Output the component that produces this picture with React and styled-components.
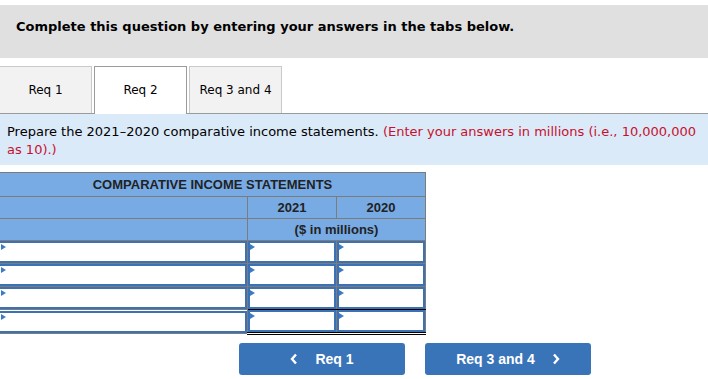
import styled, { createGlobalStyle } from "styled-components";

const GlobalStyle = createGlobalStyle`
  body {
    margin: 0;
    background: #fff;
    font-family: "DejaVu Sans", Verdana, sans-serif;
    color: #000;
  }
`;

const Page = styled.div`
  padding-top: 5px;
  width: 708px;
  overflow: hidden;
`;

const Banner = styled.div`
  box-sizing: border-box;
  height: 53px;
  padding: 14px 16px 0;
  background: #e0e0e0;
  font-size: 13px;
  font-weight: bold;
  line-height: 16px;
`;

const TabBar = styled.div`
  display: flex;
  gap: 2px;
  margin-top: 8px;
  margin-left: -1px;
  border-bottom: 1px solid #9b9b9b;
`;

const Tab = styled.div`
  box-sizing: border-box;
  width: 93px;
  display: flex;
  align-items: center;
  justify-content: center;
  font-size: 12px;
  background: ${({ $active }) => ($active ? "#fff" : "#f2f2f2")};
  border: 1px solid ${({ $active }) => ($active ? "#9b9b9b" : "#c9c9c9")};
  border-bottom: none;
  margin-bottom: ${({ $active }) => ($active ? "-1px" : "0")};
  height: ${({ $active }) => ($active ? "48px" : "47px")};
  padding-bottom: ${({ $active }) => ($active ? "1px" : "0")};
`;

const Instructions = styled.div`
  box-sizing: border-box;
  height: 51px;
  padding: 9px 4px 0 7px;
  background: #dbeaf8;
  font-size: 13px;
  line-height: 18px;
`;

const Note = styled.span`
  color: #c8102e;
`;

const Table = styled.table`
  margin-top: 7px;
  margin-left: -1px;
  width: 427px;
  border-collapse: collapse;
  table-layout: fixed;
  font-family: "Liberation Sans", Arial, sans-serif;
  font-size: 13px;
  font-weight: bold;
  color: #222;
`;

const HeadCell = styled.td`
  height: ${({ $h }) => $h}px;
  padding: 0;
  background: #78abe4;
  border: 1px solid #7c7c7c;
  text-align: center;
  vertical-align: middle;
`;

const InputCell = styled.td`
  height: 22px;
  padding: 0;
  border: 1px solid #7c7c7c;
  border-bottom: ${({ $rule }) =>
    $rule === "single"
      ? "1px solid #000"
      : $rule === "double"
      ? "3px double #000"
      : "1px solid #7c7c7c"};
  background: #fff;
`;

const Field = styled.div`
  position: relative;
  box-sizing: border-box;
  height: 22px;
  border: 2px solid #3c71b4;
  border-left-width: ${({ $first }) => ($first ? "0" : "2px")};
  background: #fff;
`;

const Marker = styled.span`
  position: absolute;
  top: 1px;
  left: ${({ $first }) => ($first ? "1px" : "0")};
  width: 0;
  height: 0;
  border-top: 3px solid transparent;
  border-bottom: 3px solid transparent;
  border-left: 5px solid #3d7ac6;
`;

const NavRow = styled.div`
  display: flex;
  gap: 20px;
  margin-top: 8px;
  padding-left: 239px;
`;

const NavButton = styled.button`
  box-sizing: border-box;
  width: 166px;
  height: 32px;
  display: flex;
  align-items: center;
  justify-content: center;
  gap: 17px;
  border: none;
  border-radius: 3px;
  background: #3a74b8;
  color: #fff;
  font-family: "Liberation Sans", Arial, sans-serif;
  font-size: 14px;
  font-weight: bold;
  padding: 0;
`;

const Chevron = ({ dir }) => (
  <svg width="8" height="12" viewBox="0 0 8 12">
    <polyline
      points={dir === "left" ? "6,1.5 2,6 6,10.5" : "2,1.5 6,6 2,10.5"}
      fill="none"
      stroke="#fff"
      strokeWidth="2.4"
      strokeLinejoin="miter"
    />
  </svg>
);

const rows = [null, null, "single", "double"];

export default function App() {
  return (
    <Page>
      <GlobalStyle />
      <Banner>Complete this question by entering your answers in the tabs below.</Banner>
      <TabBar>
        <Tab>Req 1</Tab>
        <Tab $active>Req 2</Tab>
        <Tab>Req 3 and 4</Tab>
      </TabBar>
      <Instructions>
        Prepare the 2021–2020 comparative income statements.{" "}
        <Note>(Enter your answers in millions (i.e., 10,000,000 as 10).)</Note>
      </Instructions>
      <Table>
        <colgroup>
          <col style={{ width: 248 }} />
          <col style={{ width: 89 }} />
          <col style={{ width: 89 }} />
        </colgroup>
        <tbody>
          <tr>
            <HeadCell $h={23} colSpan={3}>COMPARATIVE INCOME STATEMENTS</HeadCell>
          </tr>
          <tr>
            <HeadCell $h={21} />
            <HeadCell $h={21}>2021</HeadCell>
            <HeadCell $h={21}>2020</HeadCell>
          </tr>
          <tr>
            <HeadCell $h={21} />
            <HeadCell $h={21} colSpan={2}>($ in millions)</HeadCell>
          </tr>
          {rows.map((rule, i) => (
            <tr key={i}>
              <InputCell>
                <Field $first>
                  <Marker $first />
                </Field>
              </InputCell>
              <InputCell $rule={rule}>
                <Field>
                  <Marker />
                </Field>
              </InputCell>
              <InputCell $rule={rule}>
                <Field>
                  <Marker />
                </Field>
              </InputCell>
            </tr>
          ))}
        </tbody>
      </Table>
      <NavRow>
        <NavButton>
          <Chevron dir="left" />
          Req 1
        </NavButton>
        <NavButton>
          Req 3 and 4
          <Chevron dir="right" />
        </NavButton>
      </NavRow>
    </Page>
  );
}
